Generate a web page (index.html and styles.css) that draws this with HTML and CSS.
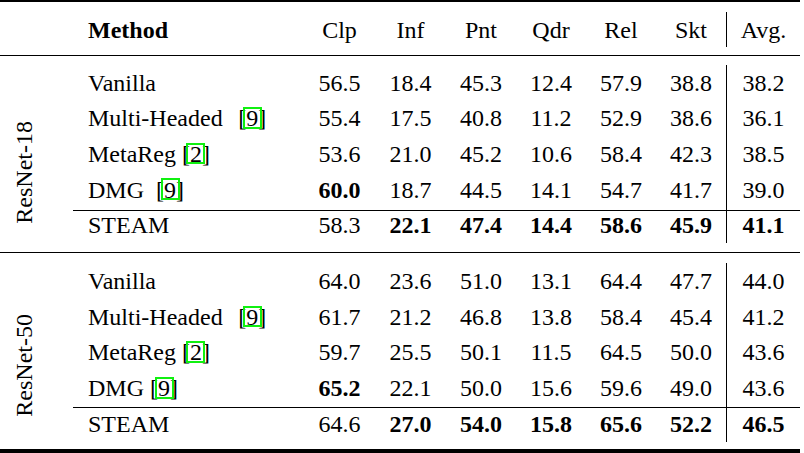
FILE: index.html
```html
<!DOCTYPE html>
<html lang="en">
<head>
<meta charset="utf-8">
<title>Results table</title>
<link rel="stylesheet" href="styles.css">
</head>
<body>
<table class="results">
  <colgroup>
    <col class="c-label">
    <col class="c-method">
    <col class="c-71">
    <col class="c-71">
    <col class="c-70">
    <col class="c-70">
    <col class="c-70">
    <col class="c-70">
    <col class="c-avg">
  </colgroup>
  <tbody>
    <tr class="rule rule-top"><td colspan="9"><div class="line heavy"></div></td></tr>
    <tr class="head">
      <td></td>
      <td class="method"><b>Method</b></td>
      <td class="num">Clp</td>
      <td class="num">Inf</td>
      <td class="num">Pnt</td>
      <td class="num">Qdr</td>
      <td class="num">Rel</td>
      <td class="num">Skt</td>
      <td class="num avg">Avg.</td>
    </tr>
    <tr class="rule rule-mid1"><td colspan="9"><div class="line mid"></div></td></tr>

    <tr class="row g1">
      <td class="group-label gl1" rowspan="5"><span class="vlabel">ResNet-18</span></td>
      <td class="method">Vanilla</td>
      <td class="num">56.5</td><td class="num">18.4</td><td class="num">45.3</td><td class="num">12.4</td><td class="num">57.9</td><td class="num">38.8</td><td class="num avg">38.2</td>
    </tr>
    <tr class="row g1">
      <td class="method">Multi-Headed <span class="cite wide">[<span class="ref">9</span>]</span></td>
      <td class="num">55.4</td><td class="num">17.5</td><td class="num">40.8</td><td class="num">11.2</td><td class="num">52.9</td><td class="num">38.6</td><td class="num avg">36.1</td>
    </tr>
    <tr class="row g1">
      <td class="method">MetaReg <span class="cite">[<span class="ref">2</span>]</span></td>
      <td class="num">53.6</td><td class="num">21.0</td><td class="num">45.2</td><td class="num">10.6</td><td class="num">58.4</td><td class="num">42.3</td><td class="num avg">38.5</td>
    </tr>
    <tr class="row g1 pre-cline1">
      <td class="method">DMG <span class="cite double">[<span class="ref">9</span>]</span></td>
      <td class="num"><b>60.0</b></td><td class="num">18.7</td><td class="num">44.5</td><td class="num">14.1</td><td class="num">54.7</td><td class="num">41.7</td><td class="num avg">39.0</td>
    </tr>
    <tr class="row best best1">
      <td class="method">STEAM</td>
      <td class="num">58.3</td><td class="num"><b>22.1</b></td><td class="num"><b>47.4</b></td><td class="num"><b>14.4</b></td><td class="num"><b>58.6</b></td><td class="num"><b>45.9</b></td><td class="num avg"><b>41.1</b></td>
    </tr>

    <tr class="rule rule-mid2"><td colspan="9"><div class="line mid"></div></td></tr>

    <tr class="row g2">
      <td class="group-label gl2" rowspan="5"><span class="vlabel">ResNet-50</span></td>
      <td class="method">Vanilla</td>
      <td class="num">64.0</td><td class="num">23.6</td><td class="num">51.0</td><td class="num">13.1</td><td class="num">64.4</td><td class="num">47.7</td><td class="num avg">44.0</td>
    </tr>
    <tr class="row g2">
      <td class="method">Multi-Headed <span class="cite wide">[<span class="ref">9</span>]</span></td>
      <td class="num">61.7</td><td class="num">21.2</td><td class="num">46.8</td><td class="num">13.8</td><td class="num">58.4</td><td class="num">45.4</td><td class="num avg">41.2</td>
    </tr>
    <tr class="row g2">
      <td class="method">MetaReg <span class="cite">[<span class="ref">2</span>]</span></td>
      <td class="num">59.7</td><td class="num">25.5</td><td class="num">50.1</td><td class="num">11.5</td><td class="num">64.5</td><td class="num">50.0</td><td class="num avg">43.6</td>
    </tr>
    <tr class="row g2 pre-cline2">
      <td class="method">DMG <span class="cite">[<span class="ref">9</span>]</span></td>
      <td class="num"><b>65.2</b></td><td class="num">22.1</td><td class="num">50.0</td><td class="num">15.6</td><td class="num">59.6</td><td class="num">49.0</td><td class="num avg">43.6</td>
    </tr>
    <tr class="row best best2">
      <td class="method">STEAM</td>
      <td class="num">64.6</td><td class="num"><b>27.0</b></td><td class="num"><b>54.0</b></td><td class="num"><b>15.8</b></td><td class="num"><b>65.6</b></td><td class="num"><b>52.2</b></td><td class="num avg"><b>46.5</b></td>
    </tr>

    <tr class="rule rule-bottom"><td colspan="9"><div class="line heavy-bottom"></div></td></tr>
  </tbody>
</table>
</body>
</html>
```

FILE: styles.css
```css
html, body {
  margin: 0;
  padding: 0;
  background: #ffffff;
}

body {
  width: 804px;
  height: 453px;
  overflow: hidden;
  font-family: "Liberation Serif", "Times New Roman", serif;
  font-size: 24px;
  line-height: 24px;
  color: #000000;
}

.results {
  width: 800px;
  table-layout: fixed;
  border-collapse: separate;
  border-spacing: 0;
}

.c-label { width: 73px; }
.c-method { width: 231px; }
.c-71 { width: 71px; }
.c-70 { width: 70px; }
.c-avg { width: 74px; }

.results td {
  padding: 0;
  vertical-align: middle;
  white-space: nowrap;
}

.results b {
  font-weight: bold;
}

/* booktabs-style rules */
.rule td {
  padding: 0;
}
.line {
  background: #000000;
}
.line.heavy {
  height: 2px;
}
.line.mid {
  height: 1.5px;
}
.line.heavy-bottom {
  height: 4px;
}
.rule-top td {
  padding-bottom: 10px;
}
.rule-mid1 td {
  padding-top: 7.5px;
  padding-bottom: 9px;
}
.rule-mid2 td {
  padding-top: 9px;
  padding-bottom: 9.5px;
}
.rule-bottom td {
  padding-top: 7.5px;
}

/* rows */
.head {
  height: 35px;
}
.row.g1 {
  height: 35.6px;
}
.row.g2 {
  height: 35.8px;
}
.pre-cline1 {
  height: 38.1px !important;
}
.pre-cline1 td {
  padding-bottom: 2.5px;
}
.best1 {
  height: 33.1px;
}
.best1 td.method,
.best1 td.num {
  border-top: 1px solid #000000;
  padding-bottom: 2.9px;
}
.pre-cline2 {
  height: 36.9px !important;
}
.pre-cline2 td {
  padding-bottom: 1.1px;
}
.best2 {
  height: 34.7px;
}
.best2 td.method,
.best2 td.num {
  border-top: 1px solid #000000;
  padding-bottom: 1.3px;
}

.method {
  padding-left: 15px !important;
  text-align: left;
}

.num {
  text-align: center;
}

.avg {
  border-left: 1px solid #000000;
}

/* rotated group labels */
.group-label {
  text-align: left;
  padding-left: 12px !important;
  line-height: 0;
}
.gl1 {
  padding-top: 37px !important;
}
.gl2 {
  padding-top: 25px !important;
  padding-bottom: 0 !important;
}
.vlabel {
  display: inline-block;
  writing-mode: vertical-rl;
  transform: rotate(180deg);
  line-height: 24px;
  vertical-align: top;
}

/* citations with link boxes */
.cite.wide {
  margin-left: 9.5px;
}
.cite.double {
  margin-left: 6px;
}
.ref {
  position: relative;
}
.ref::after {
  content: "";
  position: absolute;
  left: -3.5px;
  right: -3.5px;
  top: 1.9px;
  bottom: 2.7px;
  border: 2px solid #10f010;
}
```
